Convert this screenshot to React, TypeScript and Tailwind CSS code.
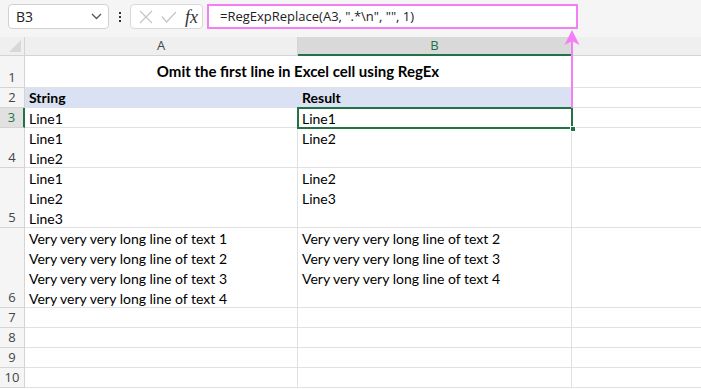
import React from 'react';

const cellFont = { fontFamily: 'Lato, "Open Sans", sans-serif' };

type Row = { num: number; h: string; a: string[]; b: string[] };

const rows: Row[] = [
  { num: 3, h: 'h-[20px]', a: ['Line1'], b: ['Line1'] },
  { num: 4, h: 'h-[40px]', a: ['Line1', 'Line2'], b: ['Line2'] },
  { num: 5, h: 'h-[60px]', a: ['Line1', 'Line2', 'Line3'], b: ['Line2', 'Line3'] },
  {
    num: 6,
    h: 'h-[80px]',
    a: [
      'Very very very long line of text 1',
      'Very very very long line of text 2',
      'Very very very long line of text 3',
      'Very very very long line of text 4',
    ],
    b: [
      'Very very very long line of text 2',
      'Very very very long line of text 3',
      'Very very very long line of text 4',
    ],
  },
  { num: 7, h: 'h-[20px]', a: [], b: [] },
  { num: 8, h: 'h-[20px]', a: [], b: [] },
  { num: 9, h: 'h-[20px]', a: [], b: [] },
  { num: 10, h: 'h-[20px]', a: [], b: [] },
];

const RowNum: React.FC<{ n: number; h: string; active?: boolean }> = ({ n, h, active }) => (
  <div
    className={`${h} w-[25px] shrink-0 flex items-end justify-center border-b border-r border-[#d4d4d4] text-[13px] leading-[20px] ${
      active ? 'bg-[#e1e1e1] text-[#217346] border-r-2 border-r-[#217346]' : 'bg-[#f5f5f5] text-[#444]'
    }`}
    style={{ fontFamily: '"Open Sans", sans-serif' }}
  >
    {n}
  </div>
);

const Cell: React.FC<{ lines: string[]; w: string; h: string }> = ({ lines, w, h }) => (
  <div className={`${h} ${w} shrink-0 flex flex-col justify-start border-b border-r border-[#e1e1e1] pl-[4px] text-[14px] leading-[20px] text-black`}>
    {lines.map((l, i) => (
      <div key={i} className="whitespace-nowrap relative top-[1px]">
        {l}
      </div>
    ))}
  </div>
);

export default function App() {
  return (
    <div className="relative w-[701px] h-[389px] overflow-hidden bg-white">
      {/* formula bar */}
      <div className="h-[37px] bg-[#f5f5f5] flex items-start pt-[4px] pl-[8px]">
        <div className="w-[101px] h-[25px] bg-white border border-[#d1d1d1] rounded-[4px] flex items-center justify-between pl-[7px] pr-[6px]">
          <span className="text-[14px] text-[#222]" style={{ fontFamily: '"Open Sans", sans-serif' }}>B3</span>
          <svg width="11" height="7" viewBox="0 0 11 7">
            <path d="M1 1 L5.5 5.5 L10 1" fill="none" stroke="#555" strokeWidth="1.3" />
          </svg>
        </div>
        <div className="w-[21px] h-[25px] flex flex-col items-center justify-center gap-[2px]">
          <div className="w-[2px] h-[2px] bg-[#333]" />
          <div className="w-[2px] h-[2px] bg-[#333]" />
          <div className="w-[2px] h-[2px] bg-[#333]" />
        </div>
        <div className="w-[73px] h-[25px] bg-white border border-[#d9d9d9] rounded-[4px] flex items-center pl-[8px] gap-[8px]">
          <svg width="14" height="14" viewBox="0 0 14 14">
            <path d="M1 1 L13 13 M13 1 L1 13" stroke="#c4c4c4" strokeWidth="1.2" />
          </svg>
          <svg width="16" height="12" viewBox="0 0 16 12">
            <path d="M1 5.5 L5.5 11 L15 1" fill="none" stroke="#c4c4c4" strokeWidth="1.2" />
          </svg>
          <span className="italic text-[18px] text-[#333] leading-none" style={{ fontFamily: '"Liberation Serif", serif' }}>
            fx
          </span>
        </div>
        <div className="ml-[4px] w-[371px] h-[25px] bg-white border-2 border-[#f47ff4] flex items-center pl-[11px]">
          <span className="text-[13px] text-[#222] whitespace-nowrap" style={{ fontFamily: '"Open Sans", sans-serif' }}>
            =RegExpReplace(A3, ".*\n", "", 1)
          </span>
        </div>
      </div>

      {/* column headers */}
      <div className="flex h-[19px] bg-[#efefef] text-[13px] text-[#444]" style={{ fontFamily: '"Open Sans", sans-serif' }}>
        <div className="w-[25px] shrink-0 border-r border-b border-[#d4d4d4] relative">
          <svg className="absolute right-[3px] bottom-[3px]" width="12" height="12" viewBox="0 0 12 12">
            <path d="M12 0 L12 12 L0 12 Z" fill="#d8d8d8" />
          </svg>
        </div>
        <div className="w-[273px] shrink-0 flex items-center justify-center border-r border-b border-[#d4d4d4]">A</div>
        <div className="w-[274px] shrink-0 flex items-center justify-center bg-[#d9d9d9] border-r border-[#d4d4d4] border-b-2 border-b-[#217346] text-[#217346]">
          B
        </div>
        <div className="flex-1 border-b border-[#d4d4d4]" />
      </div>

      {/* grid */}
      <div style={cellFont}>
        <div className="flex">
          <RowNum n={1} h="h-[32px]" />
          <div className="h-[32px] w-[547px] shrink-0 flex items-end justify-center pb-[6px] border-b border-r border-[#e1e1e1] text-[15px] leading-[20px] font-bold text-black">
            Omit the first line in Excel cell using RegEx
          </div>
          <div className="h-[32px] flex-1 border-b border-[#e1e1e1]" />
        </div>
        <div className="flex">
          <RowNum n={2} h="h-[20px]" />
          <div className="h-[20px] w-[273px] shrink-0 bg-[#d9e1f2] pl-[4px] text-[14px] leading-[20px] font-bold">String</div>
          <div className="h-[20px] w-[274px] shrink-0 bg-[#d9e1f2] border-r border-[#e1e1e1] pl-[4px] text-[14px] leading-[20px] font-bold">
            Result
          </div>
          <div className="h-[20px] flex-1 border-b border-[#e1e1e1]" />
        </div>
        {rows.map(r => (
          <div key={r.num} className="flex">
            <RowNum n={r.num} h={r.h} active={r.num === 3} />
            <Cell lines={r.a} w="w-[273px]" h={r.h} />
            <Cell lines={r.b} w="w-[274px]" h={r.h} />
            <div className={`${r.h} flex-1 border-b border-[#e1e1e1]`} />
          </div>
        ))}
      </div>

      {/* selection B3 */}
      <div className="absolute left-[297px] top-[107px] w-[276px] h-[22px] border-2 border-[#217346] pointer-events-none" />
      <div className="absolute left-[570px] top-[126px] w-[6px] h-[6px] bg-[#217346] border border-white" />

      {/* pink arrow */}
      <svg className="absolute left-[560px] top-[28px]" width="24" height="82" viewBox="0 0 24 82">
        <path d="M12 12 L12 80" stroke="#f47ff4" strokeWidth="2" />
        <path d="M12 2 L4.5 17 L12 13 L19.5 17 Z" fill="#f47ff4" />
      </svg>
    </div>
  );
}
